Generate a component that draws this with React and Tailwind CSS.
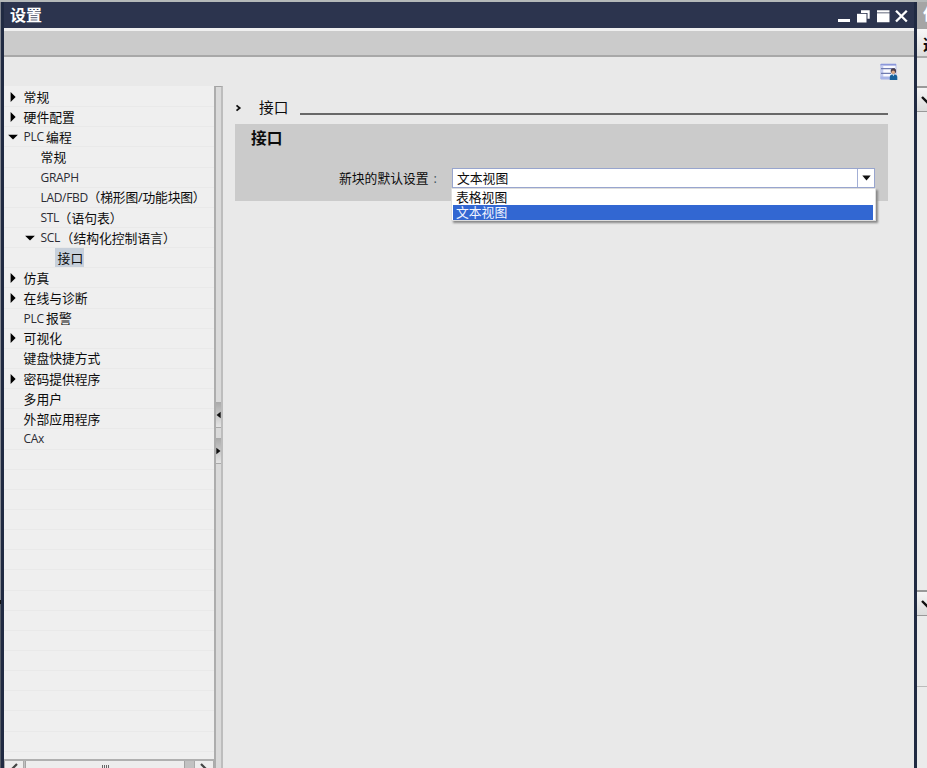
import React from 'react'
import clsx from 'clsx'

const treeItems = [
  { label: '常规', level: 0, arrow: 'right' },
  { label: '硬件配置', level: 0, arrow: 'right' },
  { latin: 'PLC', latinWidth: 'w-[22.5px]', label: '编程', level: 0, arrow: 'down' },
  { label: '常规', level: 1 },
  { latin: 'GRAPH', latinWidth: 'w-[38px]', level: 1 },
  { latin: 'LAD/FBD', latinWidth: 'w-[47px]', label: '（梯形图/功能块图）', level: 1, tight: true },
  { latin: 'STL', latinWidth: 'w-[18px]', label: '（语句表）', level: 1 },
  { latin: 'SCL', latinWidth: 'w-[20px]', label: '（结构化控制语言）', level: 1, arrow: 'down' },
  { label: '接口', level: 2, selected: true },
  { label: '仿真', level: 0, arrow: 'right' },
  { label: '在线与诊断', level: 0, arrow: 'right' },
  { latin: 'PLC', latinWidth: 'w-[22.5px]', label: '报警', level: 0 },
  { label: '可视化', level: 0, arrow: 'right' },
  { label: '键盘快捷方式', level: 0 },
  { label: '密码提供程序', level: 0, arrow: 'right' },
  { label: '多用户', level: 0 },
  { label: '外部应用程序', level: 0 },
  { latin: 'CAx', latinWidth: 'w-[24px]', level: 0 },
]

const emptyRows = Array.from({ length: 16 })

const indents = ['pl-[4px]', 'pl-[21px]', 'pl-[38px]']

const Arrow = ({ dir }) => (
  <svg width="10" height="10" viewBox="0 0 10 10" className="shrink-0">
    {dir === 'right' && <path d="M2.6 .1v9.8L7.6 5z" fill="#000" />}
    {dir === 'down' && <path d="M.1 2.8h9.8L5 7.5z" fill="#000" />}
  </svg>
)

const TreeRow = ({ item }) => (
  <div className={clsx('flex h-[20.15px] shrink-0 items-center border-b border-[#e9e9e9] whitespace-nowrap', item && indents[item.level])}>
    {item && (
      <>
        <Arrow dir={item.arrow} />
        <span className={clsx('ml-[3px] flex h-[19px] items-center pt-[1px] pr-[1px] pl-[2.6px]', item.selected && 'bg-[#c7d0db]')}>
          {item.latin && (
            <span className={clsx("shrink-0 font-['Open_Sans','Noto_Sans',sans-serif] text-[12px] tracking-[-0.35px] text-[#2c2c34]", item.latinWidth)}>
              {item.latin}
            </span>
          )}
          <span className={clsx(item.tight && 'tracking-[-0.2px]')}>{item.label}</span>
        </span>
      </>
    )}
  </div>
)

const TitleBar = () => (
  <div className="flex h-[26px] shrink-0 items-center justify-between bg-[#2c344e] pr-[5px] pb-[1px] pl-[6px] text-white">
    <span className="text-[16px] font-bold leading-none">设置</span>
    <svg width="72" height="16" viewBox="0 0 72 16" fill="#fff">
      <path d="M1 12h12v3H1z" />
      <path d="M24 3.3h8.7v8.4h-2.2V6H24z" />
      <path d="M20 6.8h9.5v8.7H20z" />
      <path d="M40 3.2h12.5v2.3H40zM40 6.3h12.5v9H40z" />
      <path d="M59 3.7l10.8 10.8M69.8 3.7L59 14.5" stroke="#fff" strokeWidth="2.3" fill="none" />
    </svg>
  </div>
)

// table with a small user figure in the corner
const UserSettingsIcon = () => (
  <svg width="18" height="18" viewBox="0 0 18 18">
    <path d="M1 1h15v15H1z" fill="#f9faff" stroke="#b3bce6" />
    <path d="M.5 1h15.5v1.6H.5z" fill="#8b97da" />
    <path d="M.5 2.6h2.8v13H.5z" fill="#c3caef" />
    <path d="M1 5.7h14M1 10.3h10" stroke="#707cb0" strokeWidth="1.2" />
    <path d="M.5 13.5h10.5v2.7H.5z" fill="#a9b5e7" />
    <circle cx="13.4" cy="8" r="2.7" fill="#493d49" />
    <circle cx="13.2" cy="9.2" r="1.8" fill="#dda984" />
    <path d="M9.8 17v-3c0-1.8 1.3-2.8 3.6-2.8s3.9 1 3.9 2.8v3z" fill="#17619b" />
    <path d="M12.4 11.3h2l-1 2z" fill="#e8f3fa" />
  </svg>
)

const Splitter = () => (
  <div className="flex w-[9px] shrink-0 flex-col border-x-2 border-t border-l-[#adadad] border-r-[#bdbdbd] border-t-[#a3a3a3] bg-[#dadada] pt-[315px]">
    <div className="flex h-[26px] w-[5px] items-center justify-center border-b border-[#aaa] bg-gradient-to-b from-[#a9a9a9] to-[#e5e5e5]">
      <svg width="5" height="8" viewBox="0 0 5 8"><path d="M4.7 .8v6.4L.5 4z" fill="#111" /></svg>
    </div>
    <div className="mt-[10px] flex h-[26px] w-[5px] items-center justify-center border-b border-[#aaa] bg-gradient-to-b from-[#a9a9a9] to-[#e5e5e5]">
      <svg width="5" height="8" viewBox="0 0 5 8"><path d="M.3 .8v6.4L4.5 4z" fill="#111" /></svg>
    </div>
  </div>
)

const HScrollbar = () => (
  <div className="flex h-[9px] shrink-0 overflow-hidden border-t-2 border-[#b0b0b0] bg-[#c2c2c2]">
    <div className="flex w-[20px] justify-center border-x border-[#aaa] bg-[#ededed]">
      <svg width="12" height="12" viewBox="0 0 12 12" className="shrink-0"><path d="M9 3L4.5 7.5 9 12" fill="none" stroke="#444" strokeWidth="2.2" /></svg>
    </div>
    <div className="ml-[1px] flex w-[160px] justify-center border-x border-[#a3a3a3] bg-[#ededed] pt-[4px]">
      <div className="flex h-[6px] gap-[1px]">
        <div className="w-[1px] bg-[#666]" />
        <div className="w-[1px] bg-[#666]" />
        <div className="w-[1px] bg-[#666]" />
        <div className="w-[1px] bg-[#666]" />
      </div>
    </div>
    <div className="ml-[9px] flex flex-1 justify-center border-x border-[#aaa] bg-[#ededed]">
      <svg width="12" height="12" viewBox="0 0 12 12" className="shrink-0"><path d="M3 3l4.5 4.5L3 12" fill="none" stroke="#444" strokeWidth="2.2" /></svg>
    </div>
  </div>
)

const SettingsPanel = () => (
  <div className="flex min-w-0 flex-1 flex-col pr-[26px] pl-[12px]">
    <div className="flex h-[38px] shrink-0 items-start">
      <svg width="8" height="8" viewBox="0 0 8 8" className="mt-[18px]"><path d="M1.5 1.4L4.7 4 1.5 6.6" fill="none" stroke="#111" strokeWidth="1.8" /></svg>
      <span className="mt-[11px] ml-[16px] text-[14.7px] leading-[20px]">接口</span>
      <div className="mt-[27px] ml-[12px] h-[2px] flex-1 bg-[#686868]" />
    </div>
    <div className="h-[77px] shrink-0 bg-[#cbcbcb] pl-[15px]">
      <div className="h-[44px] pt-[4px] pl-[1px] text-[15.7px] font-bold leading-[20px]">接口</div>
      <div className="flex">
        <div className="w-[202px] shrink-0 pl-[89px] text-[12.8px] leading-[20px] whitespace-nowrap">
          新块的默认设置<span className="ml-[5px] text-[#3d5560]">:</span>
        </div>
        <div className="relative w-[423px]">
          <div className="flex h-[20px] border border-[#98a5ce] bg-white">
            <span className="flex-1 pl-[4px] text-[12.8px] leading-[19px]">文本视图</span>
            <span className="flex w-[17px] items-center justify-center border-l border-[#a3afd5]">
              <svg width="9" height="6" viewBox="0 0 9 6"><path d="M.3 .6h8.4L4.5 5.4z" fill="#111" /></svg>
            </span>
          </div>
          <div className="absolute top-[20px] -left-[1px] h-[33px] w-[425px] border border-[#ddd] bg-white pt-[1px] text-[12.8px] shadow-[2px_2px_2px_#888]">
            <div className="h-[15px] pl-[4px] leading-[15px]">表格视图</div>
            <div className="mr-[2px] ml-[1px] h-[15px] bg-[#3267d2] pl-[3px] leading-[15px] text-[#f0f4ff]">文本视图</div>
          </div>
        </div>
      </div>
    </div>
  </div>
)

const Chevron = () => (
  <svg width="12" height="10" viewBox="0 0 12 10" className="shrink-0"><path d="M1 2l5 5 5-5" fill="none" stroke="#111" strokeWidth="2.4" /></svg>
)

// only the first few pixels of the task card are visible
const TaskCard = () => (
  <div className="flex w-[10px] shrink-0 flex-col overflow-hidden whitespace-nowrap bg-[#ebebeb]">
    <div className="h-[27px] shrink-0 bg-[#a5a5a5] pl-[6px] text-[16px] font-bold leading-[25px] text-white">任务</div>
    <div className="h-[29px] shrink-0 border-b-2 border-[#aaa] bg-gradient-to-b from-[#f8f8f8] to-[#ddd] pl-[6px] text-[15px] font-bold leading-[30px]">选项</div>
    <div className="h-[30px] shrink-0 border-b-2 border-[#999]" />
    <div className="flex h-[24px] shrink-0 items-center border-b border-[#999] bg-gradient-to-b from-[#f5f5f5] to-[#dcdcdc] pl-[4px]"><Chevron /></div>
    <div className="h-[480px] shrink-0 border-b-2 border-[#999]" />
    <div className="flex h-[24px] shrink-0 items-center border-b border-[#999] bg-gradient-to-b from-[#f5f5f5] to-[#dcdcdc] pl-[4px]"><Chevron /></div>
    <div className="h-[71px] shrink-0 border-b border-[#bbb]" />
  </div>
)

const App = () => {
  return (
    <div className="flex h-[768px] w-[927px] overflow-hidden border-t-2 border-[#b5b9b9] bg-[#e9e9e9] font-['Open_Sans','Noto_Sans_CJK_SC',sans-serif] text-[12.8px] leading-none text-[#0c0c0c]">
      <div className="flex w-[1px] shrink-0 flex-col bg-[#858992]">
        <div className="h-[598px]" />
        <div className="h-[4px] bg-[#111]" />
        <div className="flex-1 bg-[#555b66]" />
      </div>
      <div className="flex w-[916px] shrink-0 flex-col border-r-3 border-l-3 border-[#202a42]">
        <TitleBar />
        <div className="h-[3px] shrink-0 bg-[#f0f0f0]" />
        <div className="h-[26px] shrink-0 border-b-2 border-[#a8a8a8] bg-[#cbcbcb]" />
        <div className="flex h-[29px] shrink-0 items-start justify-end pt-[6px] pr-[16px]">
          <UserSettingsIcon />
        </div>
        <div className="flex min-h-0 flex-1">
          <div className="flex w-[210px] shrink-0 flex-col bg-[#efefef]">
            <div className="flex min-h-0 flex-1 flex-col overflow-hidden pt-[1px]">
              {treeItems.map((item, i) => <TreeRow key={i} item={item} />)}
              {emptyRows.map((_, i) => <TreeRow key={i} />)}
            </div>
            <HScrollbar />
          </div>
          <Splitter />
          <SettingsPanel />
        </div>
      </div>
      <TaskCard />
    </div>
  )
}

export default App
